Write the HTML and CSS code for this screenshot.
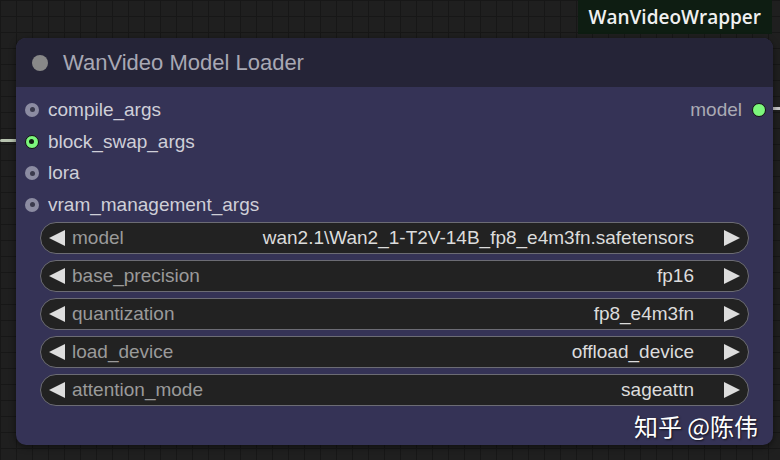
FILE: index.html
```html
<!DOCTYPE html>
<html lang="en">
<head>
  <meta charset="UTF-8" />
  <title>WanVideo Model Loader</title>
  <link rel="stylesheet" href="styles.css">
</head>
<body>
  <div class="canvas">
    <div class="wire wire-in"></div>
    <div class="wire wire-out"></div>

    <div class="badge-row">
      <span class="badge">WanVideoWrapper</span>
    </div>

    <div class="node">
      <div class="node-title">
        <span class="title-dot"></span>
        WanVideo Model Loader
      </div>

      <div class="node-body">
        <div class="slots">
          <div class="inputs">
            <div class="slot-row"><span class="slot"></span>compile_args</div>
            <div class="slot-row"><span class="slot linked"></span>block_swap_args</div>
            <div class="slot-row"><span class="slot"></span>lora</div>
            <div class="slot-row"><span class="slot"></span>vram_management_args</div>
          </div>
          <div class="outputs">
            <div class="slot-row out">model<span class="slot out-slot"></span></div>
          </div>
        </div>

        <div class="widgets">
          <div class="widget">
            <span class="arrow left"></span>
            <span class="w-label">model</span>
            <span class="w-value">wan2.1\Wan2_1-T2V-14B_fp8_e4m3fn.safetensors</span>
            <span class="arrow right"></span>
          </div>
          <div class="widget">
            <span class="arrow left"></span>
            <span class="w-label">base_precision</span>
            <span class="w-value">fp16</span>
            <span class="arrow right"></span>
          </div>
          <div class="widget">
            <span class="arrow left"></span>
            <span class="w-label">quantization</span>
            <span class="w-value">fp8_e4m3fn</span>
            <span class="arrow right"></span>
          </div>
          <div class="widget">
            <span class="arrow left"></span>
            <span class="w-label">load_device</span>
            <span class="w-value">offload_device</span>
            <span class="arrow right"></span>
          </div>
          <div class="widget">
            <span class="arrow left"></span>
            <span class="w-label">attention_mode</span>
            <span class="w-value">sageattn</span>
            <span class="arrow right"></span>
          </div>
        </div>

        <div class="watermark">知乎 @陈伟</div>
      </div>
    </div>
  </div>
</body>
</html>
```

FILE: styles.css
```css
body {
  margin: 0;
  background: #1e1e1e;
  font-family: "Liberation Sans", Arial, sans-serif;
}
.canvas {
  position: relative;
  width: 780px;
  height: 460px;
  overflow: hidden;
  background-color: #1f1f1f;
  background-image:
    linear-gradient(to right, #171717 1px, transparent 1px),
    linear-gradient(to bottom, #171717 1px, transparent 1px);
  background-size: 16px 16px;
}
.wire {
  position: absolute;
  height: 3px;
  border-radius: 2px;
}
.wire-in {
  left: 0;
  top: 139px;
  width: 24px;
  background: #b8c4b0;
}
.wire-out {
  left: 770px;
  top: 107px;
  width: 12px;
  background: #c8c8c8;
}
.badge-row {
  display: flex;
  justify-content: flex-end;
  height: 34px;
  padding-right: 8px;
}
.badge {
  background: #0e1d12;
  color: #f0f0f0;
  font-family: "Open Sans", "Noto Sans", sans-serif;
  font-size: 19px;
  font-weight: 600;
  line-height: 34px;
  padding: 0 11px 0 10px;
}
.node {
  position: relative;
  margin: 4px 7px 0 16px;
  height: 407px;
  background: #353356;
  border-radius: 10px;
  overflow: hidden;
  display: flex;
  flex-direction: column;
  box-shadow: 0 2px 6px rgba(0, 0, 0, 0.5);
}
.node-title {
  height: 49px;
  background: #252437;
  display: flex;
  align-items: center;
  gap: 15px;
  padding-left: 16px;
  color: #a8a8b4;
  font-size: 22px;
}
.title-dot {
  width: 16px;
  height: 16px;
  border-radius: 50%;
  background: #888;
}
.node-body {
  flex: 1;
  display: flex;
  flex-direction: column;
  padding-top: 7px;
}
.slots {
  display: flex;
  justify-content: space-between;
}
.slot-row {
  height: 31.7px;
  display: flex;
  align-items: center;
  gap: 9px;
  padding-left: 9px;
  color: #cfcfd8;
  font-size: 19px;
}
.slot-row.out {
  gap: 10px;
  padding-left: 0;
  padding-right: 7px;
  color: #aaaab4;
}
.slot {
  position: relative;
  width: 14px;
  height: 14px;
  border-radius: 50%;
  background: #8c8ca2;
  box-sizing: border-box;
}
.slot::after {
  content: "";
  position: absolute;
  left: 4.5px;
  top: 4.5px;
  width: 5px;
  height: 5px;
  border-radius: 50%;
  background: #3a3a4c;
}
.slot.linked {
  background: #7cf77c;
  border: 1.5px solid #111;
}
.slot.linked::after {
  left: 3px;
  top: 3px;
  background: #142014;
}
.slot.out-slot {
  background: #7cf77c;
  border: 1.5px solid #111;
}
.slot.out-slot::after {
  display: none;
}
.widgets {
  display: flex;
  flex-direction: column;
  gap: 6px;
  margin: 1px 24px 0;
}
.widget {
  height: 32px;
  box-sizing: border-box;
  border: 1px solid #6c6c74;
  border-radius: 16px;
  background: #222222;
  display: flex;
  align-items: center;
  padding: 0 8px;
  font-size: 19px;
}
.arrow {
  width: 0;
  height: 0;
  border-top: 8px solid transparent;
  border-bottom: 8px solid transparent;
}
.arrow.left {
  border-right: 16px solid #dddddd;
  margin-right: 7px;
}
.arrow.right {
  border-left: 16px solid #dddddd;
  margin-left: 30px;
}
.w-label {
  color: #9a9a9a;
}
.w-value {
  flex: 1;
  text-align: right;
  color: #dcdcdc;
  white-space: nowrap;
}
.watermark {
  display: flex;
  justify-content: flex-end;
  margin-top: 2px;
  padding-right: 15px;
  color: #ffffff;
  font-family: "Noto Sans CJK SC", sans-serif;
  font-size: 24px;
  line-height: 36px;
  text-shadow: 1px 1px 2px rgba(0, 0, 0, 0.7);
}
```
